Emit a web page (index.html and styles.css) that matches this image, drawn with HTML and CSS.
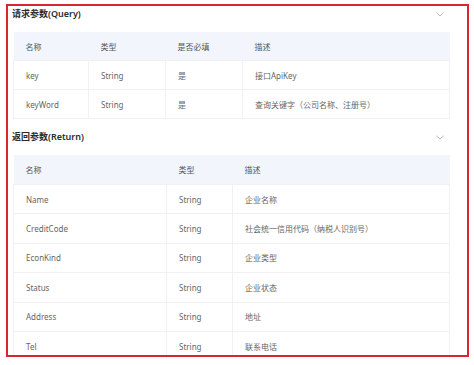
FILE: index.html
```html
<!DOCTYPE html>
<html lang="zh">
<head>
<meta charset="utf-8">
<link rel="stylesheet" href="styles.css">
</head>
<body>
<div class="frame">
  <div class="section-head">
    <span class="section-title">请求参数(Query)</span>
    <svg class="chev" width="8" height="5" viewBox="0 0 8 5"><path d="M0.5 0.8 L4 4 L7.5 0.8" fill="none" stroke="#b4b4b4" stroke-width="0.9"/></svg>
  </div>
  <table class="params q">
    <colgroup><col style="width:75px"><col style="width:77px"><col style="width:77px"><col></colgroup>
    <thead><tr><th>名称</th><th>类型</th><th>是否必填</th><th>描述</th></tr></thead>
    <tbody>
      <tr><td>key</td><td>String</td><td>是</td><td>接口ApiKey</td></tr>
      <tr><td>keyWord</td><td>String</td><td>是</td><td>查询关键字（公司名称、注册号）</td></tr>
    </tbody>
  </table>
  <div class="section-head second">
    <span class="section-title">返回参数(Return)</span>
    <svg class="chev" width="8" height="5" viewBox="0 0 8 5"><path d="M0.5 0.8 L4 4 L7.5 0.8" fill="none" stroke="#b4b4b4" stroke-width="0.9"/></svg>
  </div>
  <table class="params r">
    <colgroup><col style="width:153px"><col style="width:66px"><col></colgroup>
    <thead><tr><th>名称</th><th>类型</th><th>描述</th></tr></thead>
    <tbody>
      <tr><td>Name</td><td>String</td><td>企业名称</td></tr>
      <tr><td>CreditCode</td><td>String</td><td>社会统一信用代码（纳税人识别号）</td></tr>
      <tr><td>EconKind</td><td>String</td><td>企业类型</td></tr>
      <tr><td>Status</td><td>String</td><td>企业状态</td></tr>
      <tr><td>Address</td><td>String</td><td>地址</td></tr>
      <tr><td>Tel</td><td>String</td><td>联系电话</td></tr>
    </tbody>
  </table>
</div>
</body>
</html>
```

FILE: styles.css
```css
html, body {
  margin: 0;
  padding: 0;
  background: #ffffff;
}
body {
  font-family: "Noto Sans", "Noto Sans CJK SC", sans-serif;
}
.frame {
  box-sizing: border-box;
  margin: 4px 0 0 6px;
  width: 463px;
  height: 353px;
  border: 2px solid #d4282e;
  overflow: hidden;
  padding: 0 17px 0 5px;
}
.section-head {
  display: flex;
  justify-content: space-between;
  align-items: center;
  height: 16px;
  margin-left: -1px;
  padding-right: 6px;
}
.section-head.second {
  margin-top: 10px;
}
.section-title {
  font-size: 9px;
  font-weight: 600;
  color: #2b2b2b;
  line-height: 16px;
}
.chev {
  display: block;
}
.params {
  width: 100%;
  table-layout: fixed;
  border-collapse: collapse;
  margin-top: 10px;
  font-size: 8px;
  color: #666666;
}
.params th {
  background: #f2f6fc;
  font-weight: 400;
  color: #555555;
  text-align: left;
  padding: 0 0 0 12px;
  height: 28px;
  border: none;
}
.params td {
  text-align: left;
  padding: 0 0 0 12px;
  height: 28px;
  border: 1px solid #f1f1f1;
  white-space: nowrap;
}
.params.r th {
  height: 29px;
}
.params.r td {
  height: 28.4px;
}
```
